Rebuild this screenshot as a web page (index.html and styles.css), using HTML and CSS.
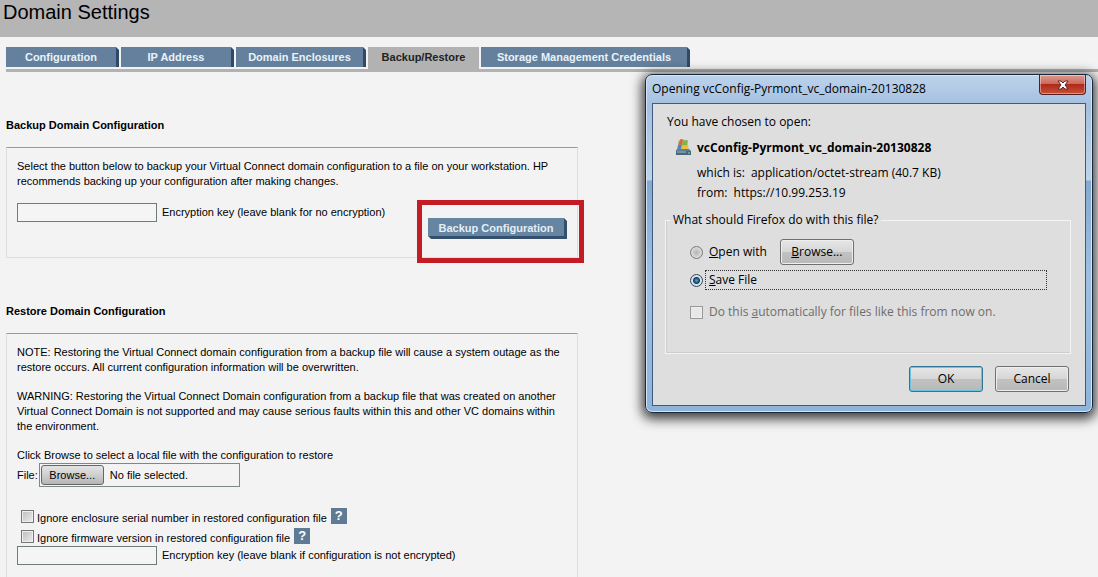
FILE: index.html
```
<!DOCTYPE html>
<html lang="en">
<head>
  <meta charset="UTF-8" />
  <meta name="viewport" content="width=device-width, initial-scale=1.0"/>
  <title>Domain Settings</title>
  <link rel="stylesheet" href="styles.css">
</head>
<body>
  <header class="page-header">
    <h1>Domain Settings</h1>
  </header>

  <nav class="tabs">
    <a href="#" class="tab">Configuration</a>
    <a href="#" class="tab">IP Address</a>
    <a href="#" class="tab tab-enclosures">Domain Enclosures</a>
    <a href="#" class="tab active">Backup/Restore</a>
    <a href="#" class="tab tab-storage">Storage Management Credentials</a>
  </nav>

  <main class="content">
    <h2>Backup Domain Configuration</h2>
    <section class="panel backup">
      <p>Select the button below to backup your Virtual Connect domain configuration to a file on your workstation. HP recommends backing up your configuration after making changes.</p>
      <div class="key-row">
        <input type="text" id="backup-key" class="key-input">
        <label for="backup-key">Encryption key (leave blank for no encryption)</label>
      </div>
      <div class="highlight">
        <button type="button" class="backup-btn"><span>Backup Configuration</span></button>
      </div>
    </section>

    <h2>Restore Domain Configuration</h2>
    <section class="panel restore">
      <p>NOTE: Restoring the Virtual Connect domain configuration from a backup file will cause a system outage as the restore occurs. All current configuration information will be overwritten.</p>
      <p>WARNING: Restoring the Virtual Connect Domain configuration from a backup file that was created on another Virtual Connect Domain is not supported and may cause serious faults within this and other VC domains within the environment.</p>
      <div>Click Browse to select a local file with the configuration to restore</div>
      <div class="file-row">
        <label for="file-browse">File:</label>
        <div class="file-box">
          <button type="button" id="file-browse" class="file-btn">Browse...</button>
          <span>No file selected.</span>
        </div>
      </div>
      <div class="check-row">
        <input type="checkbox" id="ignore-serial">
        <label for="ignore-serial">Ignore enclosure serial number in restored configuration file</label>
        <button type="button" class="help">?</button>
      </div>
      <div class="check-row">
        <input type="checkbox" id="ignore-firmware">
        <label for="ignore-firmware">Ignore firmware version in restored configuration file</label>
        <button type="button" class="help">?</button>
      </div>
      <div class="key-row">
        <input type="text" id="restore-key" class="key-input">
        <label for="restore-key">Encryption key (leave blank if configuration is not encrypted)</label>
      </div>
    </section>
  </main>

  <div class="dialog" role="dialog" aria-labelledby="dialog-title">
    <div class="title-bar">
      <span id="dialog-title">Opening vcConfig-Pyrmont_vc_domain-20130828</span>
      <button type="button" class="close" aria-label="Close">
        <svg width="12" height="10" viewBox="0 0 12 10">
          <path d="M1 1h3l2 2 2-2h3L8 5l3 4H8L6 7 4 9H1l3-4z" fill="#fff" stroke="#5a2a2a" stroke-width="1"/>
        </svg>
      </button>
    </div>
    <div class="dialog-body">
      <div>You have chosen to open:</div>
      <div class="file-info">
        <svg width="17" height="17" viewBox="0 0 17 17">
          <path d="M3 2L6 0 12 1 14 11 4 12z" fill="#b9c9a0"/>
          <path d="M5 1Q7 -1 8 1L7 6Q5 5 3 6z" fill="#e2633a"/>
          <path d="M8 1Q10 2 13 1L12 6Q10 7 7 6z" fill="#7fb24a"/>
          <path d="M3 6Q5 5 7 6L6 11H2z" fill="#4f86c0"/>
          <path d="M7 6Q10 7 12 6L13 11H6z" fill="#efbf3c"/>
          <path d="M1 11L3 10H14L16 12V16H1z" fill="#5d7f96"/>
          <path d="M1 12H16V16H1z" fill="#47677e"/>
          <path d="M2 13H11" stroke="#9fc0d0"/>
          <path d="M13 14H15" stroke="#8fe06a"/>
        </svg>
        <div>
          <div class="file-name">vcConfig-Pyrmont_vc_domain-20130828</div>
          <div class="detail">which is: <span>application/octet-stream (40.7 KB)</span></div>
          <div class="detail">from: <span>https://10.99.253.19</span></div>
        </div>
      </div>
      <fieldset>
        <legend>What should Firefox do with this file?</legend>
        <div class="option">
          <input type="radio" name="action" id="open-with">
          <label for="open-with"><u>O</u>pen with</label>
          <button type="button" class="win-btn browse"><u>B</u>rowse...</button>
        </div>
        <div class="option save">
          <input type="radio" name="action" id="save-file" checked>
          <label for="save-file"><u>S</u>ave File</label>
        </div>
        <div class="option auto">
          <input type="checkbox" id="auto" disabled>
          <label for="auto">Do this <u>a</u>utomatically for files like this from now on.</label>
        </div>
      </fieldset>
      <div class="actions">
        <button type="button" class="win-btn ok">OK</button>
        <button type="button" class="win-btn">Cancel</button>
      </div>
    </div>
  </div>
</body>
</html>
```
FILE: styles.css
```
* {
  box-sizing: border-box;
}

body {
  font-family: "Liberation Sans", Arial, sans-serif;
  font-size: 11px;
  line-height: 15px;
  background-color: #f3f3f3;
  color: #000;
  margin: 0;
  height: 100vh;
  display: flex;
  flex-direction: column;
  overflow: hidden;
  position: relative;
}

button, input {
  font: inherit;
  margin: 0;
}

.page-header {
  background-color: #b5b5b5;
  height: 37px;
  flex: none;
  padding: 0 3px;
}

h1 {
  font-size: 20px;
  line-height: 24px;
  font-weight: normal;
  margin: 0;
}

.tabs {
  display: flex;
  gap: 2px;
  flex: none;
  margin: 10px 0 0 6px;
  border-bottom: 3px solid #b2b2b2;
}

.tab {
  width: 113px;
  height: 20px;
  line-height: 20px;
  margin-bottom: 2px;
  padding-right: 3px;
  background: linear-gradient(to right, #64809c calc(100% - 3px), #2f4a66 calc(100% - 3px));
  clip-path: polygon(0 0, calc(100% - 3px) 0, 100% 3px, 100% 100%, 0 100%);
  color: #e8f2fb;
  font-weight: bold;
  text-align: center;
  text-decoration: none;
}

.tab-enclosures {
  width: 130px;
}

.tab-storage {
  width: 209px;
}

.tab.active {
  width: 111px;
  height: 22px;
  margin-bottom: 0;
  padding: 0;
  background: #b2b2b2;
  clip-path: none;
  color: #222;
}

.content {
  flex: 1;
  display: flex;
  flex-direction: column;
  width: 572px;
  margin-left: 6px;
  padding-top: 45px;
}

h2 {
  font-size: 11px;
  line-height: 16px;
  margin: 0 0 14px;
}

.panel {
  border: 1px solid #dedede;
  border-top-color: #999;
  padding: 11px 10px;
}

.panel p {
  margin: 0 0 14px;
}

.backup {
  position: relative;
  height: 111px;
  margin-bottom: 45px;
}

.restore {
  flex: 1;
  border-bottom: none;
}

.key-row {
  display: flex;
  align-items: center;
  gap: 5px;
}

.key-input {
  width: 140px;
  height: 19px;
  border: 1px solid #6f7f78;
  background-color: #f4f5f4;
  padding: 0 3px;
}

/* red frame drawn over the corner of the panel */
.highlight {
  position: absolute;
  right: -7px;
  bottom: -6px;
  border: 5px solid #c41c24;
  padding: 13px 12px 19px 6px;
}

.backup-btn {
  display: block;
  width: 139px;
  height: 21px;
  padding: 0 3px 3px 0;
  border: none;
  background-color: #35506d;
  clip-path: polygon(0 0, calc(100% - 3px) 0, 100% 3px, 100% 100%, 3px 100%, 0 calc(100% - 3px));
  color: #e4eef7;
  font-weight: bold;
}

.backup-btn span {
  display: block;
  height: 18px;
  line-height: 20px;
  background-color: #6585a2;
}

.file-row {
  display: flex;
  align-items: center;
  gap: 1px;
  margin-bottom: 19px;
}

.file-box {
  display: flex;
  align-items: center;
  gap: 6px;
  width: 201px;
  height: 24px;
  border: 1px solid #7c8a85;
  padding: 0 1px;
}

.file-btn {
  width: 63px;
  height: 20px;
  padding: 0;
  border: 1px solid #666;
  border-radius: 3px;
  background: linear-gradient(#e4e4e4, #cfcfcf 50%, #b5b5b5);
  color: #000;
}

.check-row {
  display: flex;
  align-items: center;
  height: 20px;
  padding-left: 4px;
}

.check-row label {
  margin: 4px 4px 0 3px;
}

input[type="checkbox"] {
  appearance: none;
  width: 13px;
  height: 13px;
  border: 1px solid #777;
  background: linear-gradient(135deg, #bbb, #eee);
  box-shadow: inset 0 0 0 1px #eee;
}

.help {
  width: 16px;
  height: 16px;
  padding: 0;
  border: none;
  background-color: #5f7a94;
  color: #fff;
  font-size: 13px;
  line-height: 16px;
  font-weight: bold;
}

/* download dialog */
.dialog {
  position: absolute;
  top: 74px;
  right: 5px;
  width: 448px;
  padding: 0 6px 6px;
  border: 1px solid #182838;
  border-radius: 7px;
  background: linear-gradient(#bdd3ec, #a5c0df 30px, #bdd3e8 105px, #84a9d0 106px, #9dc0e2 60%, #8fb4da);
  box-shadow: inset 0 0 0 1px #d3e5f6, 0 3px 12px 3px rgba(0, 0, 0, 0.75);
  font-family: "Open Sans", "Noto Sans", sans-serif;
  font-size: 12px;
  line-height: 16px;
}

.title-bar {
  display: flex;
  justify-content: space-between;
  height: 28px;
  line-height: 28px;
}

.close {
  display: flex;
  align-items: center;
  justify-content: center;
  width: 47px;
  height: 20px;
  padding: 0;
  border: 1px solid #52211f;
  border-top: none;
  border-radius: 0 0 4px 4px;
  background: linear-gradient(#dd9a90, #cc6a5c 45%, #b02a1a 50%, #c8503c);
  box-shadow: inset 0 0 0 1px rgba(255, 255, 255, 0.4);
}

.dialog-body {
  border: 1px solid #3d5a80;
  background-color: #dedede;
  padding: 10px 14px 13px;
}

.file-info {
  display: flex;
  gap: 5px;
  padding-left: 8px;
  margin: 9px 0;
}

.file-name {
  font-weight: bold;
  line-height: 18px;
  margin-bottom: 6px;
}

.detail {
  line-height: 20px;
}

.detail span {
  margin-left: 3px;
}

fieldset {
  height: 142px;
  margin: 0 0 12px -2px;
  padding: 11px 23px 0 24px;
  border: 1px solid #f4f4f4;
  box-shadow: inset 1px 0 0 #cdcdcd, inset 0 -1px 0 #cdcdcd;
  min-width: 0;
}

legend {
  margin-left: -20px;
  padding: 0 3px;
}

.option {
  display: flex;
  align-items: center;
  gap: 6px;
}

.browse {
  margin-left: 7px;
}

input[type="radio"] {
  appearance: none;
  width: 13px;
  height: 13px;
  border: 1px solid #777;
  border-radius: 50%;
  background: radial-gradient(#b4b4b4, #eee);
}

input[type="radio"]:checked {
  border-color: #345;
  background: radial-gradient(#5aa5cf 0, #153c5a 3px, #d8e2ea 4px);
}

.save {
  gap: 2px;
  margin-top: 5px;
}

.save label {
  flex: 1;
  height: 20px;
  line-height: 18px;
  padding: 0 3px;
  border: 1px dotted #333;
}

.auto {
  margin-top: 14px;
  color: #6d6d6d;
}

.auto input[type="checkbox"] {
  border-color: #999;
  background: #e8e8e8;
}

.actions {
  display: flex;
  justify-content: flex-end;
  gap: 12px;
  padding-right: 2px;
}

.win-btn {
  width: 74px;
  height: 26px;
  padding: 0;
  border: 1px solid #707070;
  border-radius: 3px;
  background: linear-gradient(#e6e6e6, #d6d6d6 50%, #c2c2c2 50%, #b8b8b8);
  box-shadow: inset 0 0 0 1px #eee;
  color: #000;
}

.ok {
  border-color: #2f7594;
  box-shadow: inset 0 0 0 1px #6cc4e4;
}
```
